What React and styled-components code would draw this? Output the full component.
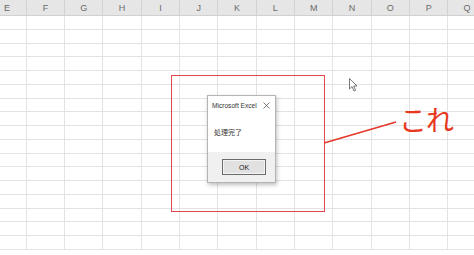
import React from "react"
import styled, { createGlobalStyle } from "styled-components"

const COLS = ["E", "F", "G", "H", "I", "J", "K", "L", "M", "N", "O", "P", "Q"]
const ROWS = 17

const GlobalStyle = createGlobalStyle`
  html, body {
    margin: 0;
    padding: 0;
    background: #fff;
  }
  * {
    box-sizing: border-box;
  }
`

const Page = styled.div`
  position: relative;
  width: 474px;
  height: 255px;
  overflow: hidden;
  background: #fff;
  font-family: "Liberation Sans", Arial, sans-serif;
`

const Sheet = styled.div`
  display: grid;
  grid-template-columns: repeat(${COLS.length}, 38.33px);
  grid-auto-rows: 13.75px;
  grid-template-rows: 16px;
  margin-left: -11.6px;
`

const HeaderCell = styled.div`
  display: flex;
  align-items: center;
  justify-content: center;
  background: #e6e6e6;
  border-right: 1px solid #d2d2d2;
  border-bottom: 1px solid #d0d0d0;
  color: #6a6a6a;
  font-size: 9px;
`

const Cell = styled.div`
  border-right: 1px solid #e3e3e3;
  border-bottom: 1px solid #e3e3e3;
`

const Highlight = styled.div`
  position: absolute;
  left: 171px;
  top: 75px;
  width: 154px;
  height: 137px;
  border: 1.5px solid #e0474f;
`

const Dialog = styled.div`
  position: absolute;
  left: 207px;
  top: 95px;
  width: 69px;
  height: 88px;
  display: flex;
  flex-direction: column;
  background: #fff;
  border: 1px solid #b4b4b4;
  box-shadow: 1px 2px 4px rgba(0, 0, 0, 0.25);
`

const TitleBar = styled.div`
  display: flex;
  align-items: center;
  justify-content: space-between;
  height: 18px;
  padding: 0 5px 0 4px;
  font-size: 6.6px;
  color: #333;
  white-space: nowrap;
`

const CloseIcon = styled.svg`
  width: 7px;
  height: 7px;
  flex-shrink: 0;
`

const Body = styled.div`
  flex: 1;
  display: flex;
  align-items: center;
  padding: 0 6px 2px;
  font-family: "Noto Sans CJK JP", "Liberation Sans", sans-serif;
  font-size: 7px;
  color: #333;
`

const Footer = styled.div`
  height: 30px;
  display: flex;
  align-items: center;
  justify-content: flex-end;
  padding: 0 9px 0 0;
  background: #f0f0f0;
`

const OkButton = styled.div`
  width: 44px;
  height: 16px;
  display: flex;
  align-items: center;
  justify-content: center;
  background: #e1e1e1;
  border: 1px solid #6b6b6b;
  box-shadow: inset 0 0 0 1px #f4f4f4;
  font-size: 7px;
  color: #222;
`

const Overlay = styled.svg`
  position: absolute;
  left: 0;
  top: 0;
  width: 474px;
  height: 255px;
  pointer-events: none;
`

const Label = styled.div`
  position: absolute;
  left: 399px;
  top: 104px;
  font-family: "Noto Sans CJK JP", "Noto Sans", sans-serif;
  font-size: 28px;
  line-height: 1.1;
  color: #e8391e;
  letter-spacing: -1px;
`

const App = () => {
  const cells = []
  for (let r = 0; r < ROWS; r++) {
    COLS.forEach(c => cells.push(<Cell key={`${c}${r}`} />))
  }

  return (
    <Page>
      <GlobalStyle />
      <Sheet>
        {COLS.map(c => (
          <HeaderCell key={c}>{c}</HeaderCell>
        ))}
        {cells}
      </Sheet>

      <Highlight />

      <Dialog>
        <TitleBar>
          <span>Microsoft Excel</span>
          <CloseIcon viewBox="0 0 7 7">
            <path d="M0.5 0.5 L6.5 6.5 M6.5 0.5 L0.5 6.5" stroke="#444" strokeWidth="0.7" />
          </CloseIcon>
        </TitleBar>
        <Body>処理完了</Body>
        <Footer>
          <OkButton>OK</OkButton>
        </Footer>
      </Dialog>

      <Overlay viewBox="0 0 474 255">
        <line x1="324" y1="143" x2="396" y2="122" stroke="#e5372a" strokeWidth="1.6" />
        <path
          d="M349.5 78.5 L349.5 89 L352 86.6 L354 91 L355.6 90.3 L353.7 86 L357 86 Z"
          fill="#fff"
          stroke="#555"
          strokeWidth="0.8"
          strokeLinejoin="round"
        />
      </Overlay>

      <Label>これ</Label>
    </Page>
  )
}

export default App
